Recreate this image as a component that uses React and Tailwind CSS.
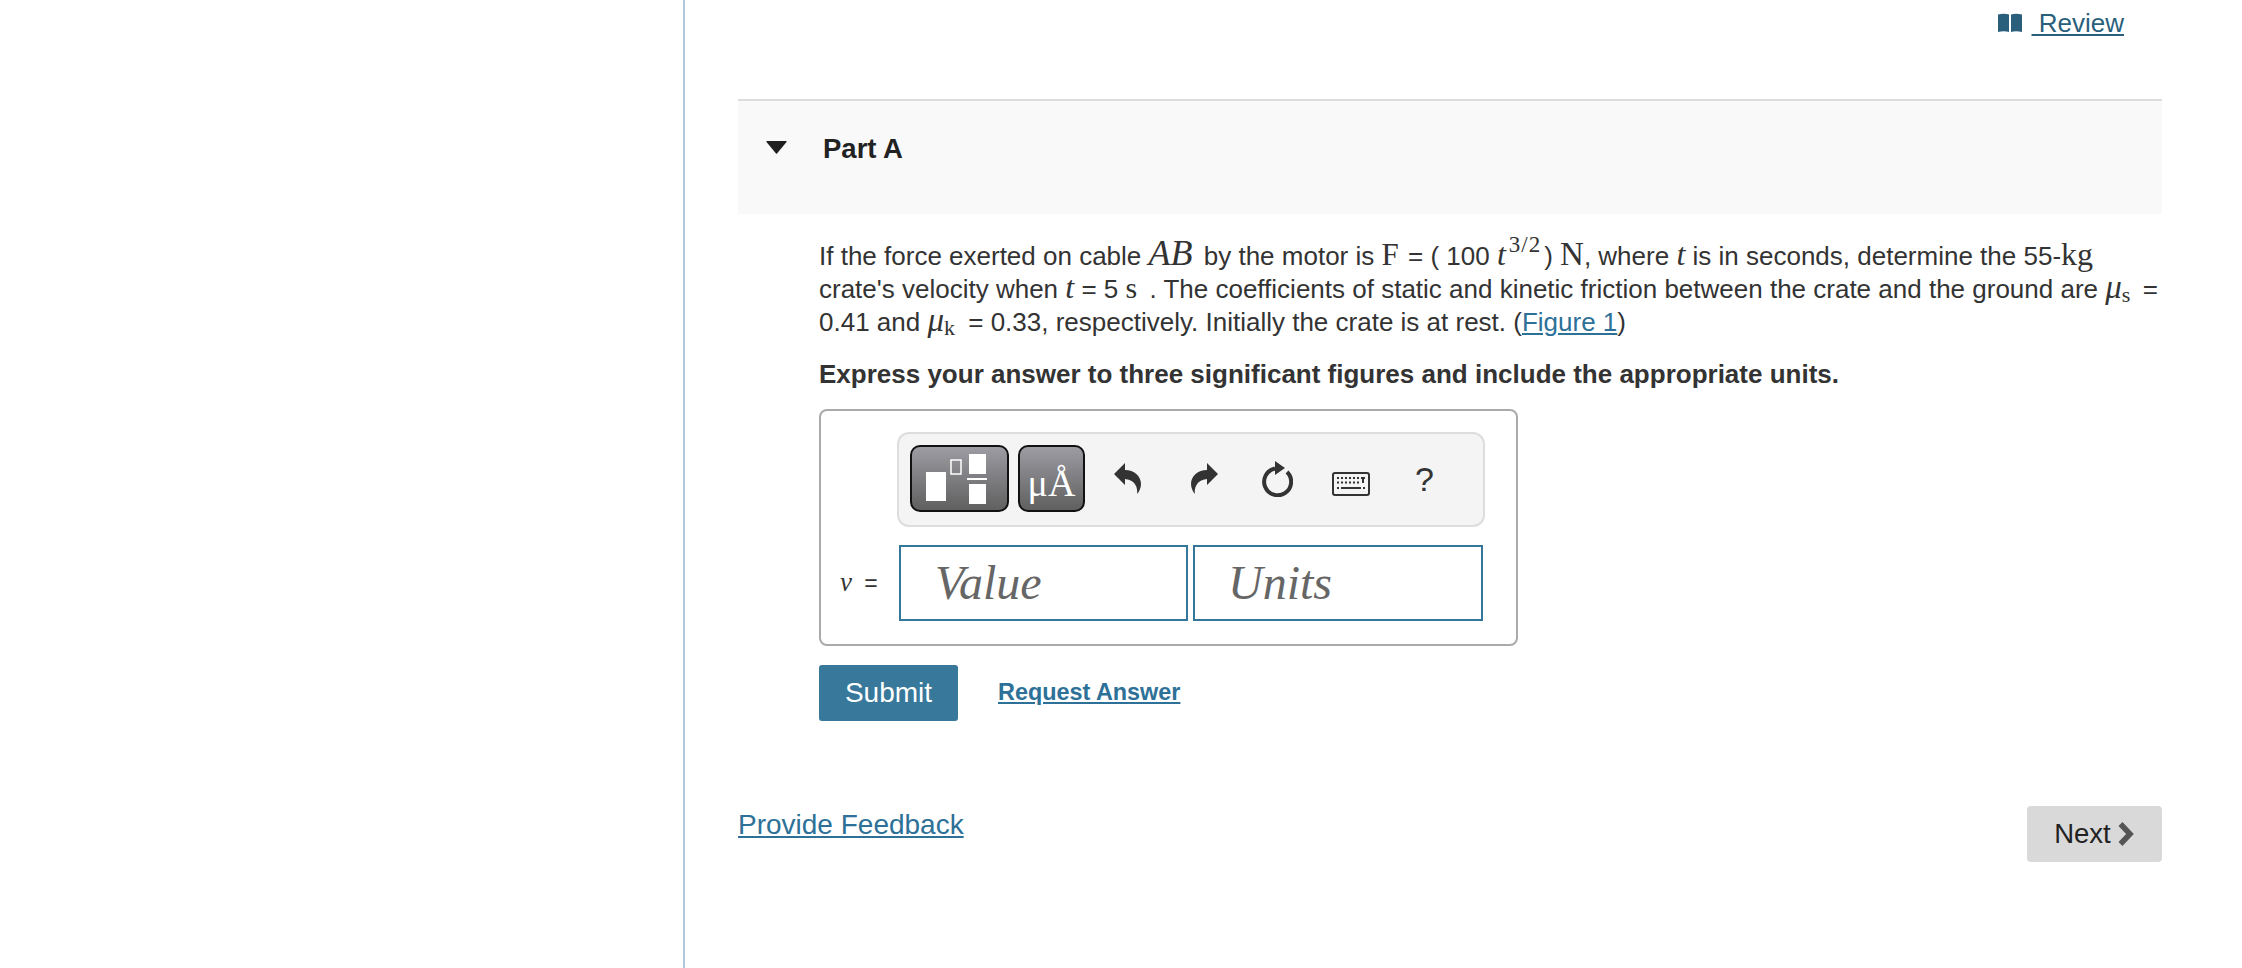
import React from 'react';

const M = ({ children, className = '' }) => (
  <span className={`font-['Liberation_Serif',serif] leading-[0] ${className}`}>{children}</span>
);

const BookIcon = () => (
  <svg width="26" height="20" viewBox="0 0 26 20" className="mr-[9px] shrink-0">
    <path d="M1 1.5C5 .5 9 .5 12 1.5V19C9 18 5 18 1 19Z" fill="#2a5f7c" />
    <path d="M14 1.5C17 .5 21 .5 25 1.5V19C21 18 17 18 14 19Z" fill="#2a5f7c" />
  </svg>
);

const TemplatesIcon = () => (
  <svg width="61" height="50" viewBox="0 0 61 50" className="mr-[6px]">
    <rect x="0" y="18" width="20" height="29" fill="#fff" />
    <rect x="25" y="6" width="10" height="14" fill="none" stroke="#fff" strokeWidth="1.5" />
    <rect x="43" y="0" width="17" height="20" fill="#fff" />
    <rect x="41" y="24" width="20" height="2" fill="#fff" />
    <rect x="43" y="30" width="17" height="20" fill="#fff" />
  </svg>
);

const UndoIcon = ({ flip }) => (
  <svg width="27" height="31" viewBox="0 0 27 31" className={flip ? '-scale-x-100' : ''}>
    <path d="M0 11 11 0V7C20 7 27 13 27 21 27 25 25 29 23 31 24 26 22 17 11 16V22Z" fill="#333" />
  </svg>
);

const RefreshIcon = () => (
  <svg width="33" height="36" viewBox="0 0 33 36">
    <path d="M15 7.500A13.500 13.500 0 1 0 27 11" fill="none" stroke="#333" strokeWidth="4" />
    <path d="M15 0 25 7 15 14Z" fill="#333" />
  </svg>
);

const KeyboardIcon = () => (
  <svg width="38" height="24" viewBox="0 0 38 24">
    <rect x="1" y="1" width="36" height="22" rx="2" fill="#f4f4f4" stroke="#333" strokeWidth="2" />
    <path d="M5 6h2M9 6h2M13 6h2M17 6h2M21 6h2M25 6h2M29 6h4M5 10.500h2M9 10.500h2M13 10.500h2M17 10.500h2M21 10.500h2M25 10.500h2M31 6v5M5 16h2M9 16h20M31 16h2" stroke="#333" strokeWidth="2" fill="none" />
  </svg>
);

const App = () => {
  return (
    <div className="flex h-[968px] w-[2242px] overflow-hidden bg-white font-['Liberation_Sans',sans-serif] text-[#333]">
      <div className="w-[685px] shrink-0 border-r-2 border-[#b5c7dc]" />

      <div className="ml-[53px] w-[1424px] shrink-0">
        <div className="flex h-[99px] items-start justify-end pr-[38px] pt-[8px]">
          <a className="flex items-center text-[26px] leading-[30px] text-[#2a5f7c] underline">
            <BookIcon />
            <span className="whitespace-pre"> Review</span>
          </a>
        </div>

        <div className="flex h-[115px] items-start border-t-2 border-[#ddd] bg-[#f9f9f9] pl-[28px]">
          <svg width="21" height="13" viewBox="0 0 21 13" className="mt-[40px]">
            <path d="M1 0H20Q21 0 20.500 1L11 12.500Q10.500 13 10 12.500L.5 1Q0 0 1 0Z" fill="#1f1f1f" />
          </svg>
          <h2 className="ml-[36px] mt-[32px] text-[27.5px] font-bold leading-[32px] text-[#222]">Part A</h2>
        </div>

        <div className="pl-[81px] pt-[26px]">
          <p className="whitespace-nowrap text-[26px] leading-[33px]">
            If the force exerted on cable <M className="mr-[4px] text-[36px] italic">AB</M> by the motor is <M className="mr-[2px] text-[31px]">F</M> = ( 100 <M className="text-[32px] italic">t</M>
            <M className="relative -top-[13px] mx-[3px] text-[23px] tracking-[1px]">3/2</M>) <M className="text-[33px]">N</M>, where <M className="text-[32px] italic">t</M> is in seconds, determine the 55-<M className="text-[32px]">kg</M>
            <br />
            crate's velocity when <M className="text-[32px] italic">t</M> = 5 <M className="mr-[5px] text-[30px]">s</M> . The coefficients of static and kinetic friction between the crate and the ground are <M className="text-[33px] italic">μ</M><M className="relative top-[4px] mr-[5px] text-[22px]">s</M> =
            <br />
            0.41 and <M className="text-[33px] italic">μ</M><M className="relative top-[4px] mr-[6px] text-[22px]">k</M> = 0.33, respectively. Initially the crate is at rest. (<a className="text-[#2d7198] underline">Figure 1</a>)
          </p>

          <p className="mt-[19px] whitespace-nowrap text-[26px] font-bold leading-[33px]">
            Express your answer to three significant figures and include the appropriate units.
          </p>

          <div className="mt-[18px] h-[237px] w-[699px] rounded-[8px] border-2 border-[#aaa] pl-[76px] pt-[21px]">
            <div className="flex h-[95px] w-[588px] items-start rounded-[12px] border-2 border-[#ddd] bg-[#f4f4f4] pl-[11px] pt-[11px]">
              <div className="flex h-[67px] w-[99px] items-center justify-center rounded-[10px] border-2 border-[#111] bg-linear-to-b from-[#9d9ca3] to-[#606060]">
                <TemplatesIcon />
              </div>
              <div className="ml-[9px] flex h-[67px] w-[67px] items-end justify-center rounded-[10px] border-2 border-[#111] bg-linear-to-b from-[#9d9ca3] to-[#606060] pb-[7px] font-['Liberation_Serif',serif] text-[38px] leading-[40px] text-white">
                μÅ
              </div>
              <div className="ml-[29px] mt-[18px]"><UndoIcon /></div>
              <div className="ml-[50px] mt-[18px]"><UndoIcon flip /></div>
              <div className="ml-[42px] mt-[16px]"><RefreshIcon /></div>
              <div className="ml-[39px] mt-[27px]"><KeyboardIcon /></div>
              <div className="ml-[45px] mt-[15px] text-[34px] leading-[38px] text-[#333]">?</div>
            </div>

            <div className="ml-[2px] mt-[18px] flex items-center">
              <div className="-ml-[59px] w-[59px] whitespace-nowrap text-[23px]">
                <M className="mr-[6px] text-[27px] italic">v</M> =
              </div>
              <div className="flex h-[76px] w-[289px] items-center border-2 border-[#34779a] pl-[34px] font-['Liberation_Serif',serif] text-[48px] italic text-[#666]">
                Value
              </div>
              <div className="ml-[5px] flex h-[76px] w-[290px] items-center border-2 border-[#34779a] pl-[33px] font-['Liberation_Serif',serif] text-[48px] italic text-[#666]">
                Units
              </div>
            </div>
          </div>

          <div className="mt-[19px] flex items-center">
            <button className="h-[56px] w-[139px] rounded-[3px] bg-[#37789b] text-[28px] text-white">Submit</button>
            <a className="ml-[40px] text-[23.4px] font-bold text-[#2d7198] underline">Request Answer</a>
          </div>
        </div>

        <div className="mt-[85px] flex items-start justify-between">
          <a className="mt-[1px] text-[28px] leading-[36px] text-[#2d7198] underline">Provide Feedback</a>
          <button className="flex h-[56px] w-[135px] items-center justify-center gap-[6px] rounded-[4px] bg-[#d9d9d9] text-[27.5px] text-[#222]">
            Next
            <svg width="18" height="26" viewBox="0 0 18 26">
              <path d="M3.500 3 13 13 3.500 23" fill="none" stroke="#555" strokeWidth="5.500" />
            </svg>
          </button>
        </div>
      </div>
    </div>
  );
};

export default App;
